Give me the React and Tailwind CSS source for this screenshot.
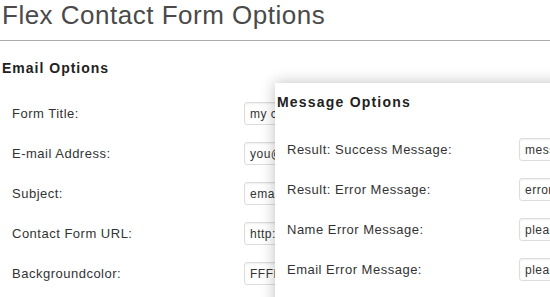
import React from 'react'

const emailRows = [
  ['Form Title:', 'my contact form'],
  ['E-mail Address:', 'you@example.com'],
  ['Subject:', 'email from website'],
  ['Contact Form URL:', 'http://example.com'],
  ['Backgroundcolor:', 'FFFFFF'],
]

const messageRows = [
  ['Result: Success Message:', 'message sent'],
  ['Result: Error Message:', 'error sending'],
  ['Name Error Message:', 'please enter your name'],
  ['Email Error Message:', 'please enter a valid email'],
]

function Row({ label, value }) {
  return (
    <div className="flex items-center h-[23px] mb-[17px]">
      <label className="w-[244px] shrink-0 pl-[12px] text-[13px] tracking-[0.5px] text-[#333] leading-none whitespace-nowrap">
        {label}
      </label>
      <input
        readOnly
        value={value}
        className="w-[160px] shrink-0 h-[23px] pl-[5px] border border-[#ddd] rounded-[3px] bg-white text-[12px] tracking-[0.5px] text-[#333] shadow-[inset_0_1px_2px_rgba(0,0,0,0.07)] outline-none"
      />
    </div>
  )
}

export default function App() {
  return (
    <div className="relative w-[550px] h-[297px] overflow-hidden bg-white font-['Liberation_Sans',Arial,sans-serif] text-[#333]">
      <h1 className="pl-[2px] text-[26px] leading-[30px] tracking-[0.5px] text-[#4a4a4a]">
        Flex Contact Form Options
      </h1>
      <hr className="mt-[10px] border-0 border-t border-[#aaa]" />

      <h2 className="mt-[17px] pl-[2px] text-[14px] leading-[20px] font-bold tracking-[1px] text-[#222]">
        Email Options
      </h2>
      <div className="mt-[24px]">
        {emailRows.map(([l, v]) => (
          <Row key={l} label={l} value={v} />
        ))}
      </div>

      {/* overlay panel */}
      <div className="absolute left-[275px] top-[83px] w-[320px] h-[260px] bg-white shadow-[0_0_14px_rgba(0,0,0,0.25)]">
        <h2 className="pt-[9px] pl-[2px] text-[14px] leading-[20px] font-bold tracking-[1.2px] text-[#222]">
          Message Options
        </h2>
        <div className="mt-[26px]">
          {messageRows.map(([l, v]) => (
            <Row key={l} label={l} value={v} />
          ))}
        </div>
      </div>
    </div>
  )
}
